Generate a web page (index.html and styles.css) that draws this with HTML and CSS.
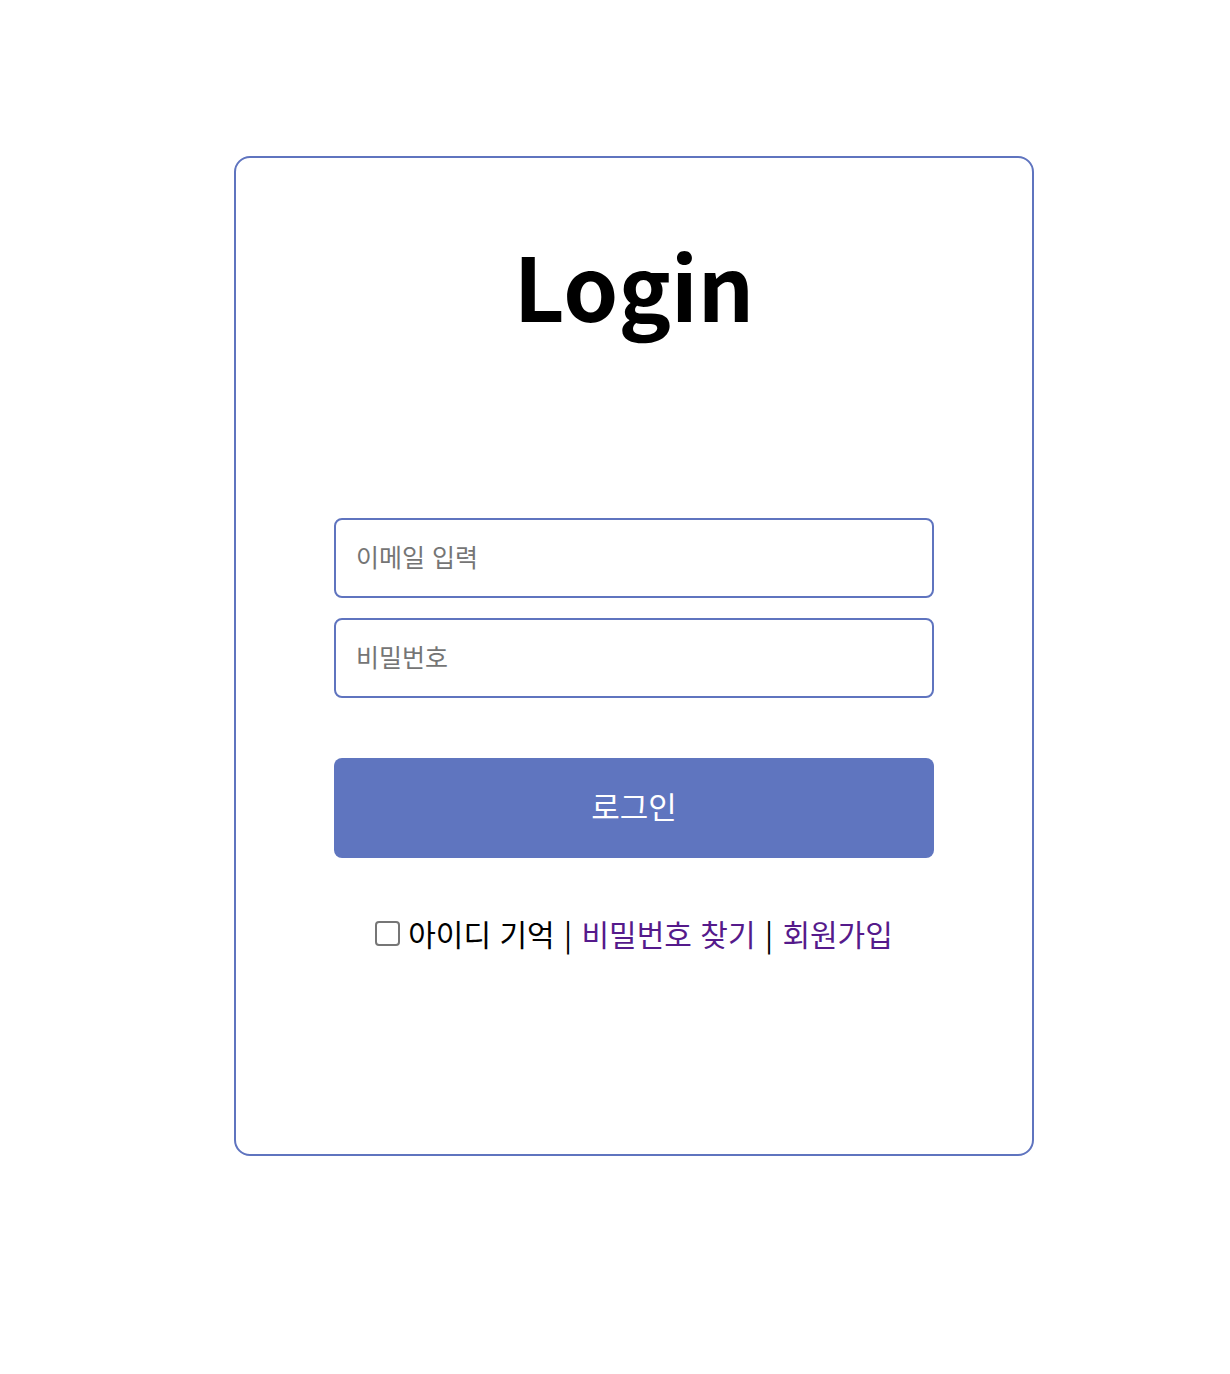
FILE: index.html
```html
<!DOCTYPE html>
<html lang="ko">
<head>
<meta charset="utf-8">
<title>Login</title>
<link rel="stylesheet" href="styles.css">
</head>
<body>
<div class="page">
  <div class="card">
    <h1 class="title">Login</h1>
    <form class="form">
      <input class="field" type="email" placeholder="이메일 입력">
      <input class="field" type="password" placeholder="비밀번호">
      <button class="submit" type="button">로그인</button>
    </form>
    <div class="extras">
      <input class="check" type="checkbox" id="remember">
      <label for="remember">아이디 기억</label>
      <span class="sep">&nbsp;|&nbsp;</span>
      <a class="link" href="#">비밀번호 찾기</a>
      <span class="sep">&nbsp;|&nbsp;</span>
      <a class="link" href="#">회원가입</a>
    </div>
  </div>
</div>
</body>
</html>
```

FILE: styles.css
```css
html, body {
  margin: 0;
  padding: 0;
  background: #ffffff;
}

body {
  font-family: "Noto Sans CJK KR", "Noto Sans", sans-serif;
  color: #000000;
}

.page {
  padding: 156px 0 0 234px;
}

.card {
  box-sizing: border-box;
  width: 800px;
  height: 1000px;
  border: 2px solid #5f74bf;
  border-radius: 16px;
  padding: 82px 98px 0;
  display: flex;
  flex-direction: column;
  align-items: center;
}

.title {
  margin: 0;
  font-size: 88px;
  line-height: 88px;
  font-weight: 700;
}

.form {
  margin-top: 190px;
  width: 600px;
  display: flex;
  flex-direction: column;
}

.field {
  box-sizing: border-box;
  height: 80px;
  width: 100%;
  border: 2px solid #5f74bf;
  border-radius: 8px;
  padding: 0 20px 4px;
  font-family: "Noto Sans CJK KR", "Noto Sans", sans-serif;
  font-size: 25px;
  color: #333333;
  outline: none;
  margin-bottom: 20px;
}

.field::placeholder {
  color: #757575;
}

.submit {
  margin-top: 40px;
  height: 100px;
  width: 100%;
  border: none;
  border-radius: 8px;
  padding: 0 0 5px;
  background: #5f75bf;
  color: #ffffff;
  font-family: "Noto Sans CJK KR", "Noto Sans", sans-serif;
  font-size: 31px;
  cursor: pointer;
}

.extras {
  margin-top: 54px;
  display: flex;
  align-items: center;
  font-size: 30px;
  line-height: 42px;
  white-space: pre;
}

.check {
  appearance: none;
  -webkit-appearance: none;
  box-sizing: border-box;
  width: 25px;
  height: 25px;
  margin: 0 8px 0 0;
  border: 2px solid #767676;
  border-radius: 4px;
  background: #ffffff;
}

.sep {
  color: #000000;
  margin: 0 1px;
}

.link {
  color: #551a8b;
  text-decoration: none;
}
```
